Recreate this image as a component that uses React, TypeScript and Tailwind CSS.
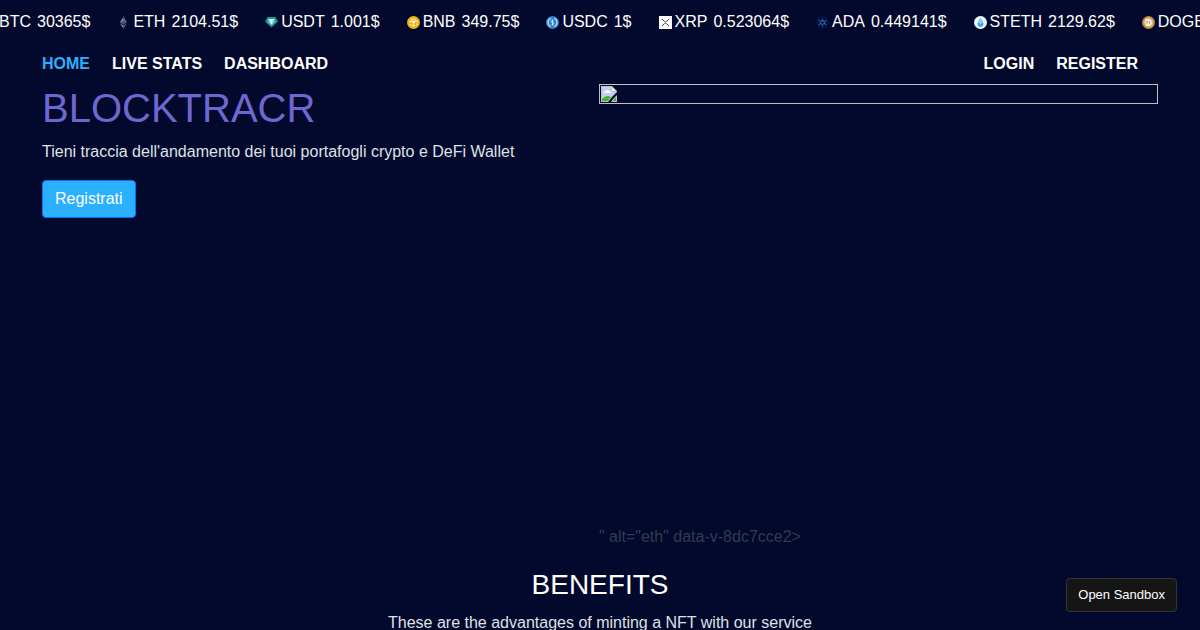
import type { ReactNode } from 'react';

function BtcIcon() {
  return (
    <svg className="size-[13px]" viewBox="0 0 26 26" aria-hidden="true">
      <circle cx="13" cy="13" r="13" fill="#f7931a" />
      <path d="M10 7v12M10 7h4a3 3 0 0 1 0 6h-4m4 0a3 3 0 0 1 0 6h-4" stroke="#fff" strokeWidth="2" fill="none" />
    </svg>
  );
}

function EthIcon() {
  return (
    <svg className="size-[13px]" viewBox="0 0 26 26" aria-hidden="true">
      <path d="M13 1 6 13l7 4z" fill="#8a92b2" />
      <path d="m13 1 7 12-7 4z" fill="#5f688c" />
      <path d="m6 13 7-3 7 3-7 4z" fill="#454c72" />
      <path d="m6 15 7 4v6z" fill="#8a92b2" />
      <path d="m20 15-7 4v6z" fill="#5f688c" />
    </svg>
  );
}

function UsdtIcon() {
  return (
    <svg className="size-[13px]" viewBox="0 0 26 26" aria-hidden="true">
      <path d="M5 2h16l5 9-13 12L0 11z" fill="#109a95" />
      <path d="M7 6h12v3h-4v8h-4V9H7z" fill="#fff" />
      <ellipse cx="13" cy="12" rx="7" ry="1.6" fill="none" stroke="#e4f5f4" strokeWidth="1" />
    </svg>
  );
}

function BnbIcon() {
  return (
    <svg className="size-[13px]" viewBox="0 0 26 26" aria-hidden="true">
      <circle cx="13" cy="13" r="13" fill="#edb20f" />
      <path d="m13 5 7 4v8l-7 4-7-4V9z" fill="none" stroke="#fff3cf" strokeWidth="2" strokeDasharray="5 2" />
      <path d="M13 13v7M13 13 8 10M13 13l5-3" stroke="#fff8e1" strokeWidth="2.400" />
      <path d="m13 8 3 3-3 3-3-3z" fill="#fff8e1" />
    </svg>
  );
}

function UsdcIcon() {
  return (
    <svg className="size-[13px]" viewBox="0 0 26 26" aria-hidden="true">
      <circle cx="13" cy="13" r="13" fill="#2d7fcf" />
      <path d="M10 4.500a9 9 0 0 0 0 17M16 4.500a9 9 0 0 1 0 17" stroke="#b9dcf6" strokeWidth="2.600" fill="none" />
      <path d="M15.500 10.500c-1-2-5-2-5 .3s5 2 5 4.500-4 2.700-5 .5M13 7v12" stroke="#e8f4fd" strokeWidth="1.600" fill="none" />
    </svg>
  );
}

function XrpIcon() {
  return (
    <svg className="size-[13px]" viewBox="0 0 26 26" aria-hidden="true">
      <path d="M0 0h26v26H0z" fill="#fff" />
      <path d="m6 6 4.500 4.500q2.500 2.500 5 0L20 6M6 20l4.500-4.500q2.500-2.500 5 0L20 20" stroke="#33373d" strokeWidth="1.800" fill="none" />
    </svg>
  );
}

function AdaIcon() {
  return (
    <svg className="size-[13px]" viewBox="0 0 26 26" aria-hidden="true">
      <circle cx="13" cy="13" r="4" fill="none" stroke="#1d7ae0" strokeWidth="2.800" strokeDasharray="3.200 1" />
      <g fill="#1761c4">
        <circle cx="13" cy="5.500" r="1.600" />
        <circle cx="13" cy="20.500" r="1.600" />
        <circle cx="6" cy="9" r="1.800" />
        <circle cx="20" cy="9" r="1.800" />
        <circle cx="6" cy="17" r="1.800" />
        <circle cx="20" cy="17" r="1.800" />
      </g>
      <g fill="#123a7c">
        <circle cx="13" cy="1.500" r="1.200" />
        <circle cx="13" cy="24.500" r="1.200" />
        <circle cx="1.500" cy="13" r="1.200" />
        <circle cx="24.500" cy="13" r="1.200" />
        <circle cx="6" cy="3" r="1.200" />
        <circle cx="20" cy="3" r="1.200" />
        <circle cx="6" cy="23" r="1.200" />
        <circle cx="20" cy="23" r="1.200" />
      </g>
    </svg>
  );
}

function StethIcon() {
  return (
    <svg className="size-[13px]" viewBox="0 0 26 26" aria-hidden="true">
      <circle cx="13" cy="13" r="13" fill="#f1faff" />
      <path d="m13 4 5 8c3 5-1 10-5 10s-8-5-5-10z" fill="#2fa8ff" />
      <path d="m13 4 5 8-5 3-5-3z" fill="#7accff" />
      <path d="m8.500 12 4.500 3 4.500-3" stroke="#eef9ff" strokeWidth="1" fill="none" />
    </svg>
  );
}

function DogeIcon() {
  return (
    <svg className="size-[13px]" viewBox="0 0 26 26" aria-hidden="true">
      <circle cx="13" cy="13" r="13" fill="#b98a42" />
      <circle cx="13" cy="13" r="10" fill="#d9b573" />
      <path d="M7 6h8q5 2 5 7t-5 7H8V15H6v-3h1z" fill="#fbf1d8" />
      <path d="M10 10v5m5-4v4" stroke="#a1793c" strokeWidth="2" />
    </svg>
  );
}

const coins: { symbol: string; price: string; icon: ReactNode }[] = [
  { symbol: 'BTC', price: '30365$', icon: <BtcIcon /> },
  { symbol: 'ETH', price: '2104.51$', icon: <EthIcon /> },
  { symbol: 'USDT', price: '1.001$', icon: <UsdtIcon /> },
  { symbol: 'BNB', price: '349.75$', icon: <BnbIcon /> },
  { symbol: 'USDC', price: '1$', icon: <UsdcIcon /> },
  { symbol: 'XRP', price: '0.523064$', icon: <XrpIcon /> },
  { symbol: 'ADA', price: '0.449141$', icon: <AdaIcon /> },
  { symbol: 'STETH', price: '2129.62$', icon: <StethIcon /> },
  { symbol: 'DOGE', price: '0.094$', icon: <DogeIcon /> },
];

function Ticker() {
  return (
    <div className="overflow-hidden py-2.5">
      <ul className="-ml-[17px] flex w-max gap-[27px]">
        {coins.map((coin) => (
          <li key={coin.symbol} className="flex items-center gap-[3px] whitespace-nowrap text-white">
            {coin.icon}
            <span className="flex gap-1.5">
              <span>{coin.symbol}</span>
              <span>{coin.price}</span>
            </span>
          </li>
        ))}
      </ul>
    </div>
  );
}

function BrokenImage() {
  return (
    <div className="h-5 border border-[#c0c0c0] p-px" role="img" aria-label="eth">
      <svg className="size-4" viewBox="0 0 16 16" aria-hidden="true">
        <path d="M0 0h11l5 5v1l-4 4-5 6H0z" fill="#c0c0c0" />
        <path d="M1 1h9v5h5l-4 4-4.500 5H1z" fill="#bcd3f6" />
        <path d="M3 7q0-2 2-2 1-2 3 0 2 0 2 2z" fill="#fff" />
        <path d="M1 15v-2q4-5 9-2l-3.500 4z" fill="#4fae35" />
        <path d="M11 1v4h4z" fill="#f5f5f5" />
        <path d="M16 9v7h-6l2-3z" fill="#c0c0c0" />
        <path d="M15 11.500V15h-3l1-2z" fill="#4fae35" />
      </svg>
    </div>
  );
}

export default function App() {
  return (
    <div className="min-h-screen overflow-hidden bg-[#03092c] font-['Liberation_Sans',Arial,sans-serif] text-base leading-6 text-[#dee2e6]">
      <Ticker />
      <nav className="flex justify-between px-[42px] pt-2 font-bold text-white">
        <div className="flex gap-[22px]">
          <a href="#home" className="text-[#2ab0ff]">HOME</a>
          <a href="#stats">LIVE STATS</a>
          <a href="#dashboard">DASHBOARD</a>
        </div>
        <div className="flex gap-[22px] pr-5">
          <a href="#login">LOGIN</a>
          <a href="#register">REGISTER</a>
        </div>
      </nav>
      <main className="px-[42px] pt-2">
        <section className="grid grid-cols-[499fr_501fr]">
          <div>
            <h1 className="mb-2 text-[40px] leading-12 text-[#6f67cf]">BLOCKTRACR</h1>
            <p className="mb-4">Tieni traccia dell'andamento dei tuoi portafogli crypto e DeFi Wallet</p>
            <button type="button" className="rounded border border-[#0d6efd] bg-[#2ab0ff] px-3 py-1.5 text-white">
              Registrati
            </button>
          </div>
          <div>
            <BrokenImage />
            <p className="mt-[421px] text-[#2c3e50]">" alt="eth" data-v-8dc7cce2&gt;</p>
          </div>
        </section>
        <section className="pt-5 text-center">
          <h2 className="mb-2.5 text-[28px] leading-8 text-white">BENEFITS</h2>
          <p>These are the advantages of minting a NFT with our service</p>
        </section>
      </main>
      <button
        type="button"
        className="fixed right-[23px] bottom-[18px] rounded border border-[#343434] bg-[#151515] px-[11px] py-2 text-[13px] leading-4 text-white"
      >
        Open Sandbox
      </button>
    </div>
  );
}
